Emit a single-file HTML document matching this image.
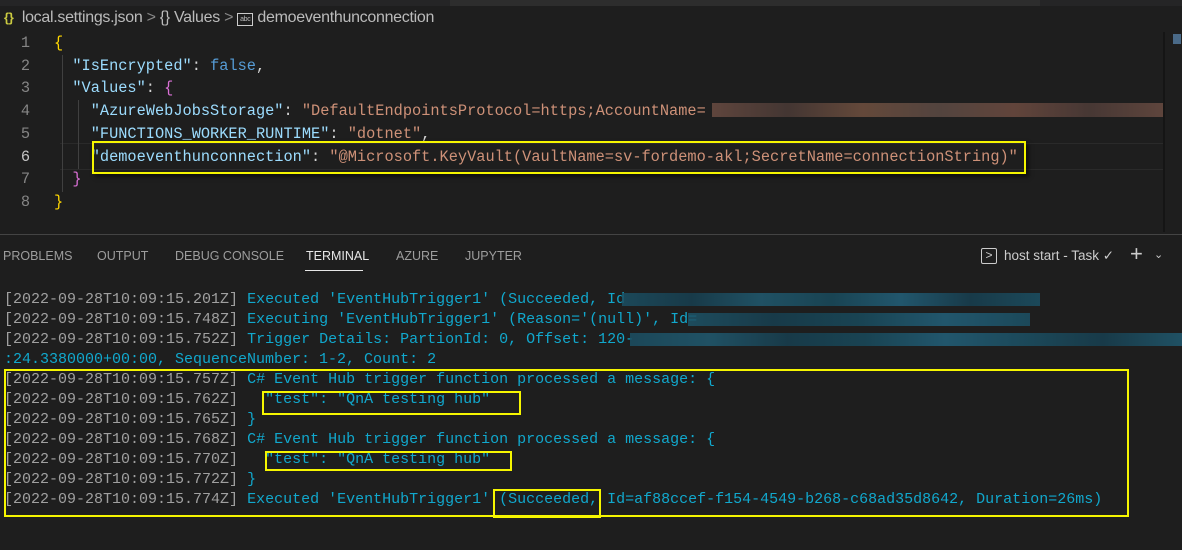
<!DOCTYPE html>
<html><head><meta charset="utf-8"><style>
*{margin:0;padding:0;box-sizing:border-box}
body{width:1182px;height:550px;background:#1e1e1e;position:relative;overflow:hidden;font-family:"Liberation Sans",sans-serif}
.abs{position:absolute}
.top{left:0;top:0;width:1182px;height:6px;background:#252526}
.bc{left:4px;top:9px;font-size:16px;color:#bbbbbb;white-space:nowrap;letter-spacing:-0.3px}
.mono{font-family:"Liberation Mono",monospace;white-space:pre}
.ed{font-size:15.3px;line-height:22.7px}
.ln{color:#858585;width:30px;text-align:right;left:0}
.k{color:#9cdcfe}.s{color:#ce9178}.b{color:#569cd6}.g{color:#ffd700}.p{color:#da70d6}.w{color:#d4d4d4}
.guide{width:1px;background:#404040}
.term{font-size:15px;line-height:20px;left:4px}
.t{color:#a0a0a0}.c{color:#11a8cd}
.box{border:2px solid #f5f500}
.tab{top:249px;font-size:12.5px;color:#9d9d9d;letter-spacing:0px}
</style></head><body>
<div class="abs top"></div>
<div class="abs" style="left:450px;top:0;width:590px;height:6px;background:#2d2d2d"></div>
<div class="abs bc"><span style="color:#cbcb41;font-weight:bold;font-size:13px">{}</span>&nbsp; local.settings.json <span style="color:#888">&gt;</span> {} Values <span style="color:#888">&gt;</span> <span style="display:inline-block;width:16px;height:13px;border:1px solid #ccc;font-size:7px;line-height:11px;text-align:center;vertical-align:1px">abc</span> demoeventhunconnection</div>

<!-- editor -->
<div class="abs" style="left:60px;top:143px;width:1105px;height:27px;border-top:1px solid #2a2a2a;border-bottom:1px solid #2a2a2a"></div>
<div class="abs guide" style="left:62px;top:55px;height:137px"></div>
<div class="abs guide" style="left:78px;top:100px;height:69px"></div>
<div class="abs mono ed ln" style="top:32px">1
2
3
4
5
<span style="color:#c6c6c6">6</span>
7
8</div>
<div class="abs mono ed" style="left:54px;top:32px"><span class="g">{</span>
  <span class="k">"IsEncrypted"</span><span class="w">: </span><span class="b">false</span><span class="w">,</span>
  <span class="k">"Values"</span><span class="w">: </span><span class="p">{</span>
    <span class="k">"AzureWebJobsStorage"</span><span class="w">: </span><span class="s">"DefaultEndpointsProtocol=https;AccountName=</span>
    <span class="k">"FUNCTIONS_WORKER_RUNTIME"</span><span class="w">: </span><span class="s">"dotnet"</span><span class="w">,</span>
    <span class="k">"demoeventhunconnection"</span><span class="w">: </span><span class="s">"@Microsoft.KeyVault(VaultName=sv-fordemo-akl;SecretName=connectionString)"</span>
  <span class="p">}</span>
<span class="g">}</span></div>
<div class="abs" style="left:712px;top:103px;width:453px;height:14px;background:linear-gradient(90deg,#6a4c42,#4a3a36,#70503f,#5c4a44,#6d4b40,#4e3c38,#6a4c42);opacity:.85"></div>
<div class="abs box" style="left:92px;top:141px;width:934px;height:33px;box-shadow:3px 3px 4px rgba(0,0,0,.5)"></div>
<div class="abs" style="left:1163px;top:32px;width:2px;height:200px;background:#151515"></div>
<div class="abs" style="left:1173px;top:34px;width:8px;height:10px;background:#4a6a88"></div>

<!-- panel -->
<div class="abs" style="left:0;top:234px;width:1182px;height:1px;background:#444"></div>
<div class="abs tab" style="left:3px">PROBLEMS</div>
<div class="abs tab" style="left:97px">OUTPUT</div>
<div class="abs tab" style="left:175px">DEBUG CONSOLE</div>
<div class="abs tab" style="left:306px;color:#e7e7e7">TERMINAL</div>
<div class="abs" style="left:305px;top:270px;width:58px;height:1px;background:#e7e7e7"></div>
<div class="abs tab" style="left:396px">AZURE</div>
<div class="abs tab" style="left:465px">JUPYTER</div>
<div class="abs" style="left:981px;top:248px;width:16px;height:16px;border:1px solid #ccc;border-radius:2px;color:#ccc;font-size:12px;line-height:13px;text-align:center">&gt;</div>
<div class="abs" style="left:1004px;top:248px;font-size:13.5px;color:#cccccc">host start - Task ✓</div>
<div class="abs" style="left:1130px;top:241px;font-size:22px;color:#cccccc;font-weight:300">+</div>
<div class="abs" style="left:1154px;top:248px;font-size:11px;color:#ccc">⌄</div>

<div class="abs mono term" style="top:290px"><span class="t">[2022-09-28T10:09:15.201Z]</span> <span class="c">Executed 'EventHubTrigger1' (Succeeded, Id</span>
<span class="t">[2022-09-28T10:09:15.748Z]</span> <span class="c">Executing 'EventHubTrigger1' (Reason='(null)', Id=</span>
<span class="t">[2022-09-28T10:09:15.752Z]</span> <span class="c">Trigger Details: PartionId: 0, Offset: 120-</span>
<span class="c">:24.3380000+00:00, SequenceNumber: 1-2, Count: 2</span>
<span class="t">[2022-09-28T10:09:15.757Z]</span> <span class="c">C# Event Hub trigger function processed a message: {</span>
<span class="t">[2022-09-28T10:09:15.762Z]</span> <span class="c">  "test": "QnA testing hub"</span>
<span class="t">[2022-09-28T10:09:15.765Z]</span> <span class="c">}</span>
<span class="t">[2022-09-28T10:09:15.768Z]</span> <span class="c">C# Event Hub trigger function processed a message: {</span>
<span class="t">[2022-09-28T10:09:15.770Z]</span> <span class="c">  "test": "QnA testing hub"</span>
<span class="t">[2022-09-28T10:09:15.772Z]</span> <span class="c">}</span>
<span class="t">[2022-09-28T10:09:15.774Z]</span> <span class="c">Executed 'EventHubTrigger1' (Succeeded, Id=af88ccef-f154-4549-b268-c68ad35d8642, Duration=26ms)</span></div>
<div class="abs" style="left:622px;top:293px;width:418px;height:13px;background:linear-gradient(90deg,#1b4f63,#173f50,#205a70,#184a5c,#22607a,#173f50,#1b5064);opacity:.85"></div>
<div class="abs" style="left:688px;top:313px;width:342px;height:13px;background:linear-gradient(90deg,#1d5468,#173f50,#184a5c,#22607a,#1b5064);opacity:.85"></div>
<div class="abs" style="left:630px;top:333px;width:552px;height:13px;background:linear-gradient(90deg,#1b4f63,#205a70,#173f50,#184a5c,#22607a,#1b5064,#173f50,#205a70);opacity:.85"></div>

<div class="abs box" style="left:4px;top:369px;width:1125px;height:148px"></div>
<div class="abs box" style="left:262px;top:391px;width:259px;height:24px"></div>
<div class="abs box" style="left:265px;top:451px;width:247px;height:20px"></div>
<div class="abs box" style="left:493px;top:489px;width:108px;height:29px"></div>
</body></html>
